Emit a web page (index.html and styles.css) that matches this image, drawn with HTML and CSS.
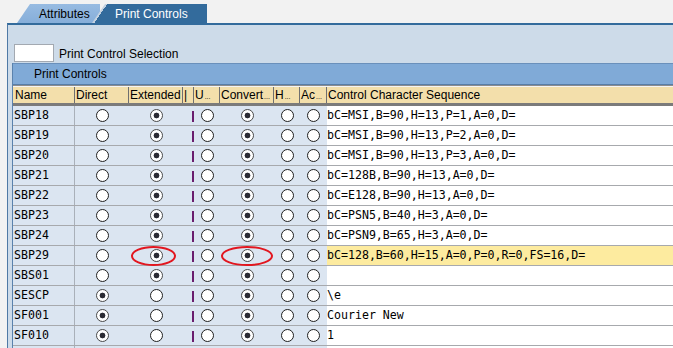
FILE: index.html
```html
<!DOCTYPE html>
<html lang="en">
<head>
  <meta charset="UTF-8">
  <title>Print Controls</title>
  <link rel="stylesheet" href="styles.css">
</head>
<body>
  <div class="tabs">
    <div class="tab tab-off">Attributes</div>
    <div class="tab tab-on">Print Controls</div>
  </div>

  <div class="panel">
    <div class="selection">
      <span class="field"></span>
      <span class="field-label">Print Control Selection</span>
    </div>

    <div class="grid">
      <div class="grid-title">Print Controls</div>
      <div class="row head">
        <div class="th">Name</div>
        <div class="th">Direct</div>
        <div class="th">Extended</div>
        <div class="th">|</div>
        <div class="th">U<span class="more">...</span></div>
        <div class="th">Convert<span class="more">...</span></div>
        <div class="th">H<span class="more">...</span></div>
        <div class="th">Ac<span class="more">...</span></div>
        <div class="th last">Control Character Sequence</div>
      </div>
      <div id="rows"></div>
    </div>
  </div>

  <!-- red marks drawn over the SBP29 row -->
  <svg class="marks" width="673" height="348" viewBox="0 0 673 348">
    <ellipse cx="153.5" cy="256" rx="21.5" ry="9" />
    <ellipse cx="247" cy="256" rx="25" ry="9" />
  </svg>

  <script>
    // name, direct/extended choice, control sequence, highlighted
    const data = [
      ['SBP18', 'ext', 'bC=MSI,B=90,H=13,P=1,A=0,D='],
      ['SBP19', 'ext', 'bC=MSI,B=90,H=13,P=2,A=0,D='],
      ['SBP20', 'ext', 'bC=MSI,B=90,H=13,P=3,A=0,D='],
      ['SBP21', 'ext', 'bC=128B,B=90,H=13,A=0,D='],
      ['SBP22', 'ext', 'bC=E128,B=90,H=13,A=0,D='],
      ['SBP23', 'ext', 'bC=PSN5,B=40,H=3,A=0,D='],
      ['SBP24', 'ext', 'bC=PSN9,B=65,H=3,A=0,D='],
      ['SBP29', 'ext', 'bC=128,B=60,H=15,A=0,P=0,R=0,FS=16,D=', true],
      ['SBS01', 'ext', ''],
      ['SESCP', 'dir', '\\e'],
      ['SF001', 'dir', 'Courier New'],
      ['SF010', 'dir', '1'],
      ['', null, '']
    ];

    function radio(on) {
      return '<div class="td c"><span class="radio' + (on ? ' on' : '') + '"></span></div>';
    }

    let html = '';
    data.forEach(function(r) {
      const filled = r[1] !== null;
      html += '<div class="row">';
      html += '<div class="td name">' + r[0] + '</div>';
      if (filled) {
        html += radio(r[1] === 'dir');
        html += radio(r[1] === 'ext');
        html += '<div class="td bar"><span class="pipe"></span></div>';
        html += radio(false);
        html += radio(true);
        html += radio(false);
        html += radio(false);
      } else {
        html += '<div class="td"></div><div class="td"></div><div class="td"></div><div class="td"></div><div class="td"></div><div class="td"></div><div class="td"></div>';
      }
      html += '<div class="td seq' + (r[3] ? ' hot' : '') + '">' + r[2] + '</div>';
      html += '</div>';
    });
    document.getElementById('rows').innerHTML = html;
  </script>
</body>
</html>
```

FILE: styles.css
```css
body {
  margin: 0;
  background: #f2f2f2;
  font-family: "Liberation Sans", Arial, sans-serif;
  font-size: 12px;
  color: #000;
  overflow: hidden;
  position: relative;
  height: 348px;
}

.tabs {
  display: flex;
  height: 19px;
  padding: 4px 0 0 17px;
}
.tab {
  height: 19px;
  line-height: 20px;
  clip-path: polygon(13px 0, 100% 0, 100% 100%, 0 100%);
}
.tab-off {
  width: 61px;
  padding-left: 22px;
  background: linear-gradient(#97bbe2, #86aed9);
}
.tab-on {
  width: 92px;
  padding-left: 23px;
  margin-left: -8px;
  color: #fff;
  background: linear-gradient(124deg, #c4d2e1 12.6px, #336b9c 12.6px);
}

.panel {
  margin-left: 7px;
  border-top: 2px solid #336b9c;
  border-left: 1px solid #4f79a5;
  background: #cddbe9;
  padding: 19px 0 0 4px;
}

.selection {
  display: flex;
  align-items: center;
  margin-left: 2px;
  height: 18px;
  margin-bottom: 1px;
}
.field {
  width: 38px;
  height: 16px;
  background: #fff;
  border: 1px solid #a3a9b1;
}
.field-label {
  margin-left: 5px;
  padding-top: 1px;
}

.grid {
  border-left: 1px solid #5a82ad;
}
.grid-title {
  height: 20px;
  line-height: 21px;
  padding-left: 21px;
  background: #80aad7;
  border-top: 1px solid #6a90bb;
  border-bottom: 1px solid #587ea8;
}

.row {
  display: grid;
  grid-template-columns: 62px 54px 54px 11px 26px 54px 26px 27px 1fr;
  height: 19px;
  border-bottom: 1px solid #a7a9ad;
  background: #dbe5f1;
}

.head {
  height: 16px;
  border-top: 1px solid #8d8d8d;
  padding-top: 1px;
  border-bottom: 3px solid #7b7b7b;
  background: #f4f4f4;
}
.th {
  background: #f3dfab;
  border-right: 1px solid #6f6f6f;
  padding-left: 1px;
  line-height: 17px;
  white-space: nowrap;
  overflow: hidden;
}
.th:first-child {
  padding-left: 2px;
}
.th.last {
  border-right: none;
}
.more {
  font-size: 7px;
  margin-left: 1px;
}

.td {
  font-family: "DejaVu Sans Mono", "Liberation Mono", monospace;
  font-size: 11.6px;
  line-height: 19px;
  white-space: nowrap;
}
.td.name {
  padding-left: 1px;
  border-right: 1px solid #a9b0b9;
}
.td.c {
  display: flex;
  align-items: center;
  justify-content: center;
}
.td.bar {
  display: flex;
  align-items: center;
  justify-content: flex-end;
}
.pipe {
  width: 2px;
  height: 11px;
  margin-top: 1px;
  background: #6a1d6e;
}
.td.seq {
  background: #fff;
  padding-left: 0;
}
.td.seq.hot {
  background: #fdeb9f;
}

.radio {
  box-sizing: border-box;
  width: 13px;
  height: 13px;
  border-radius: 50%;
  border: 1.3px solid #1f1f1f;
  background: #fff;
}
.radio.on {
  border-color: #4a4a4a;
  background: radial-gradient(circle, #2b2b33 2.6px, #fff 3.2px);
}

.marks {
  position: absolute;
  left: 0;
  top: 0;
  pointer-events: none;
}
.marks ellipse {
  fill: none;
  stroke: #e2161f;
  stroke-width: 2;
}
```
